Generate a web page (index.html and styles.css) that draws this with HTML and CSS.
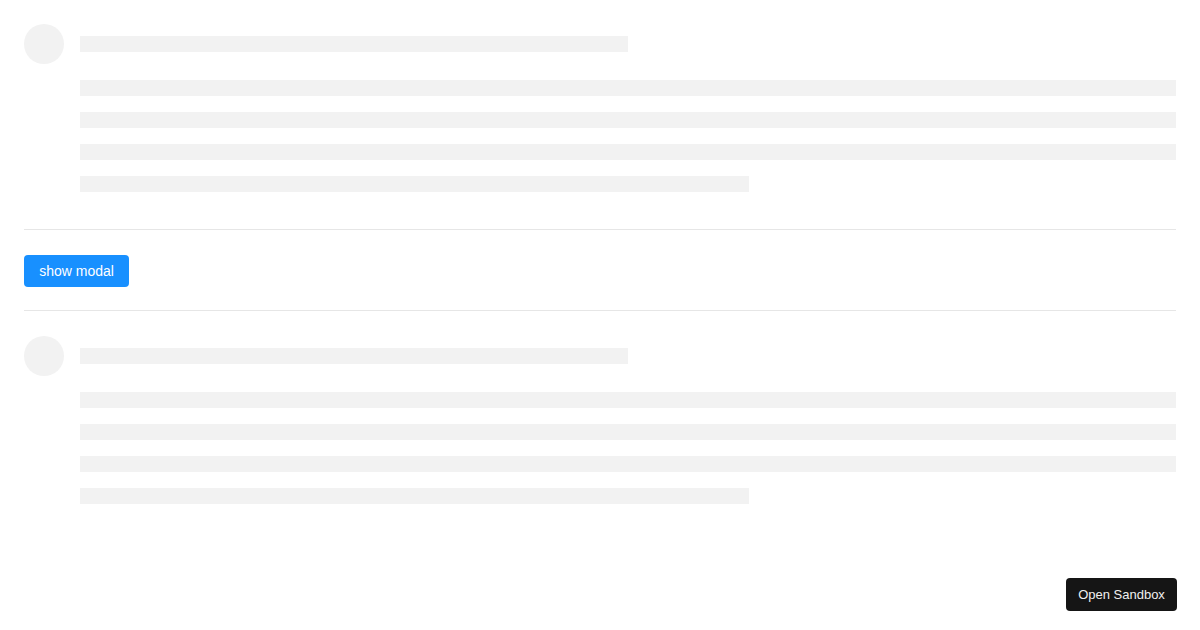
FILE: index.html
```html
<!DOCTYPE html>
<html>
<head>
<meta charset="utf-8">
<link rel="stylesheet" href="styles.css">
</head>
<body>
<div class="page">
  <div class="skeleton">
    <div class="avatar"></div>
    <div class="content">
      <div class="title"></div>
      <div class="paragraph">
        <div class="line"></div>
        <div class="line"></div>
        <div class="line"></div>
        <div class="line last"></div>
      </div>
    </div>
  </div>
  <div class="divider first"></div>
  <button class="btn-primary">show modal</button>
  <div class="divider second"></div>
  <div class="skeleton">
    <div class="avatar"></div>
    <div class="content">
      <div class="title"></div>
      <div class="paragraph">
        <div class="line"></div>
        <div class="line"></div>
        <div class="line"></div>
        <div class="line last"></div>
      </div>
    </div>
  </div>
</div>
<button class="sandbox">Open Sandbox</button>
</body>
</html>
```
FILE: styles.css
```css
html, body {
  margin: 0;
  padding: 0;
  background: #fff;
  font-family: Inter, "Liberation Sans", sans-serif;
}
.page {
  padding: 24px;
}
.skeleton {
  display: flex;
  gap: 16px;
}
.avatar {
  width: 40px;
  height: 40px;
  border-radius: 50%;
  background: #f2f2f2;
  flex: none;
}
.content {
  flex: 1;
  padding-top: 12px;
}
.title {
  width: 50%;
  height: 16px;
  background: #f2f2f2;
}
.paragraph {
  margin-top: 28px;
  display: flex;
  flex-direction: column;
  gap: 16px;
}
.line {
  height: 16px;
  background: #f2f2f2;
}
.line.last {
  width: 61%;
}
.divider {
  height: 1px;
  background: #e6e6e6;
}
.divider.first {
  margin: 37px 0 25px;
}
.divider.second {
  margin: 23px 0 25px;
}
.btn-primary {
  display: block;
  height: 32px;
  width: 105px;
  padding: 0;
  border: none;
  border-radius: 4px;
  background: #1890ff;
  color: #fff;
  font-family: "Liberation Sans", Arial, sans-serif;
  font-size: 14px;
}
.sandbox {
  position: fixed;
  right: 23px;
  bottom: 19px;
  width: 111px;
  height: 33px;
  padding: 0;
  border: none;
  border-radius: 4px;
  background: #151515;
  color: #f0f0f0;
  font-family: "Liberation Sans", Arial, sans-serif;
  font-size: 13px;
}
```
